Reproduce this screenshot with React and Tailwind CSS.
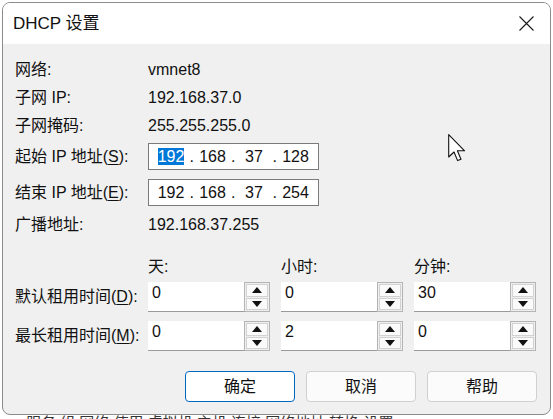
import React from "react";

const FONT = {
  fontFamily: '"Liberation Sans", "Noto Sans CJK SC", sans-serif',
};

const infoRows = [
  { label: "网络:", value: "vmnet8" },
  { label: "子网 IP:", value: "192.168.37.0" },
  { label: "子网掩码:", value: "255.255.255.0" },
];

function Accel({ before, letter }) {
  return (
    <span>
      {before}(<span className="underline underline-offset-2">{letter}</span>):
    </span>
  );
}

function IpBox({ octets, selectFirst }) {
  return (
    <div className="flex h-[27px] w-[171px] items-center border border-[#7a7a7a] bg-white pl-[7px]">
      {octets.map((o, i) => (
        <React.Fragment key={i}>
          {i > 0 && <span className="w-[11.5px] text-center">.</span>}
          <span className="w-[30px] text-center">
            {i === 0 && selectFirst ? (
              <span className="bg-[#0078d7] leading-[18px] text-white">{o}</span>
            ) : (
              o
            )}
          </span>
        </React.Fragment>
      ))}
    </div>
  );
}

function Arrow({ down }) {
  return (
    <svg width="10" height="6" viewBox="0 0 10 6">
      {down ? <path d="M0 0 H10 L5 6 Z" fill="#111" /> : <path d="M0 6 H10 L5 0 Z" fill="#111" />}
    </svg>
  );
}

function SpinField({ value }) {
  return (
    <div className="flex h-[30px] w-[122px]">
      <div className="flex-1 border-b border-[#9a9a9a] bg-white pl-[4px] pt-[1px] leading-[20px]">
        {value}
      </div>
      <div className="flex w-[26px] flex-col gap-[1px] border border-[#b4b4b4] bg-[#efefef] p-[1px]">
        <div className="flex flex-1 items-center justify-center border border-[#d2d2d2] bg-[#fafafa]">
          <Arrow />
        </div>
        <div className="flex flex-1 items-center justify-center border border-[#d2d2d2] bg-[#fafafa]">
          <Arrow down />
        </div>
      </div>
    </div>
  );
}

export default function App() {
  return (
    <div className="relative h-[419px] w-[553px] overflow-hidden bg-white text-[16px] text-[#111]" style={FONT}>
      <div className="px-[2px] pt-[2px]">
        {/* dialog window */}
        <div className="flex h-[413px] flex-col overflow-hidden rounded-lg border border-[#8c8c8c] bg-[#f0f0f0]">
          <div className="flex h-[41px] shrink-0 items-center justify-between bg-white pl-[10px] pr-[16px]">
            <span className="text-[17px]">DHCP 设置</span>
            <svg width="15" height="15" viewBox="0 0 15 15">
              <path d="M0.5 0.5 L14.5 14.5 M14.5 0.5 L0.5 14.5" stroke="#1a1a1a" strokeWidth="1.1" />
            </svg>
          </div>

          <div className="flex flex-col pl-[12px] pt-[12px]">
            {infoRows.map((r) => (
              <div key={r.label} className="flex h-[28px] items-center">
                <span className="w-[133px]">{r.label}</span>
                <span>{r.value}</span>
              </div>
            ))}

            <div className="mt-[3px] flex items-center">
              <span className="w-[133px]">
                <Accel before="起始 IP 地址" letter="S" />
              </span>
              <IpBox octets={["192", "168", "37", "128"]} selectFirst />
            </div>
            <div className="mt-[9px] flex items-center">
              <span className="w-[133px]">
                <Accel before="结束 IP 地址" letter="E" />
              </span>
              <IpBox octets={["192", "168", "37", "254"]} />
            </div>
            <div className="mt-[6px] flex h-[26px] items-center">
              <span className="w-[133px]">广播地址:</span>
              <span>192.168.37.255</span>
            </div>

            <div className="mt-[19px] flex h-[20px] items-center gap-[11px] pl-[133px]">
              <span className="w-[122px]">天:</span>
              <span className="w-[122px]">小时:</span>
              <span className="w-[122px]">分钟:</span>
            </div>
            <div className="mt-[5px] flex items-center">
              <span className="w-[133px]">
                <Accel before="默认租用时间" letter="D" />
              </span>
              <div className="flex gap-[11px]">
                <SpinField value="0" />
                <SpinField value="0" />
                <SpinField value="30" />
              </div>
            </div>
            <div className="mt-[9px] flex items-center">
              <span className="w-[133px]">
                <Accel before="最长租用时间" letter="M" />
              </span>
              <div className="flex gap-[11px]">
                <SpinField value="0" />
                <SpinField value="2" />
                <SpinField value="0" />
              </div>
            </div>

            <div className="mt-[20px] flex gap-[11px] pl-[170px]">
              <button className="h-[31px] w-[110px] rounded-[4px] border border-[#0067c0] bg-white">确定</button>
              <button className="h-[31px] w-[110px] rounded-[4px] border border-[#d0d0d0] bg-[#fbfbfb]">取消</button>
              <button className="h-[31px] w-[110px] rounded-[4px] border border-[#d0d0d0] bg-[#fbfbfb]">帮助</button>
            </div>
          </div>
        </div>
        <div className="h-[4px] overflow-hidden whitespace-nowrap pl-[24px] text-[15px] leading-[15px] text-[#333]">
          服务 组 网络 使用 虚拟机 主机 连接 网络地址 转换 设置
        </div>
      </div>

      {/* mouse pointer */}
      <svg className="absolute left-[448px] top-[134px]" width="19" height="28" viewBox="0 0 19 28">
        <path d="M0.7 0.7 V23 L6 18 L9.6 26.6 L13 25.2 L9.4 16.8 H16.6 Z" fill="#fff" stroke="#111" strokeWidth="1.1" strokeLinejoin="round" />
      </svg>
    </div>
  );
}
